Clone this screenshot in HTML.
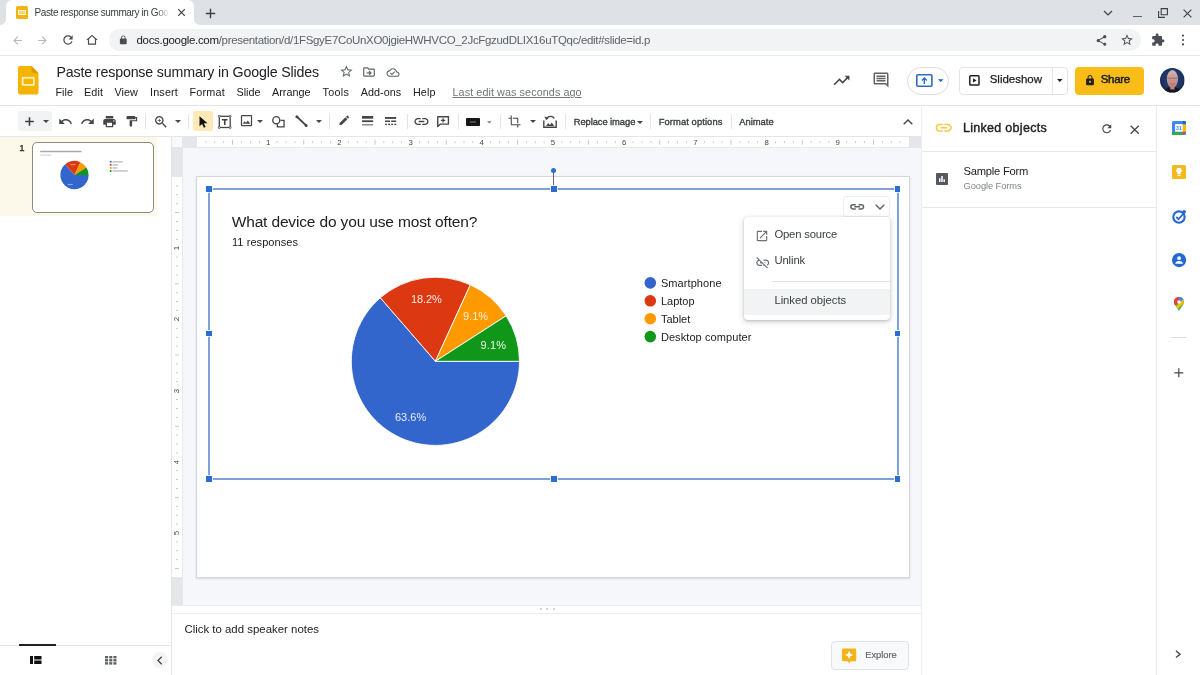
<!DOCTYPE html>
<html>
<head>
<meta charset="utf-8">
<title>Paste response summary in Google Slides</title>
<style>
*{box-sizing:border-box;margin:0;padding:0}
html,body{width:1200px;height:675px;overflow:hidden;background:#fff}
body{font-family:"Liberation Sans",sans-serif;color:#202124;position:relative;font-size:12px}
.abs{position:absolute}
.t{position:absolute;white-space:nowrap;line-height:1}
svg{position:absolute;overflow:visible}
/* browser chrome */
#tabbar{left:0;top:0;width:1200px;height:25px;background:#dee1e6}
#tab{left:6px;top:0;width:188px;height:26px;background:#fff;border-radius:6px 6px 0 0}
#navrow{left:0;top:25px;width:1200px;height:30px;background:#fff}
#omni{left:109px;top:29px;width:1032px;height:22px;border-radius:11px;background:#f1f3f4}
#navline{left:0;top:54.700px;width:1200px;height:1px;background:#e6e8eb}
/* docs header */
#hdrline{left:0;top:105px;width:1200px;height:1px;background:#e3e5e8}
#tbline{left:0;top:136px;width:921px;height:1px;background:#e3e5e8}
.menu{top:87px;font-size:12px;color:#202124}
/* filmstrip */
#film{left:0;top:137px;width:171px;height:538px;background:#fff}
#filmsel{left:0;top:137px;width:157px;height:78.500px;background:#fcf8ea}
#filmborder{left:171px;top:137px;width:1px;height:538px;background:#e3e5e8}
#thumb{left:32.200px;top:141.700px;width:122px;height:71.500px;border:1.800px solid #8c8c84;border-radius:5px;background:#fff}
/* canvas */
#canvas{left:172px;top:137px;width:749px;height:469px;background:#f5f7fa}
#hruler{left:197px;top:137px;width:712px;height:10px;background:#fff}
#vruler{left:172px;top:177px;width:10px;height:400px;background:#fff}
#slide{left:196px;top:176px;width:714px;height:402px;background:#fff;border:1px solid #d4d6da;box-shadow:0 1px 2px rgba(0,0,0,.12)}
/* right panel */
#rpanel{left:921px;top:106px;width:236px;height:569px;background:#fff;border-left:1px solid #eceef1}
#side{left:1156px;top:106px;width:44px;height:569px;background:#fff;border-left:1px solid #e8eaed}
</style>
</head>
<body>
<div id="w" style="position:absolute;left:0;top:0;width:1200px;height:675px;will-change:transform">
<!-- ===== browser chrome ===== -->
<div class="abs" id="tabbar"></div>
<div class="abs" id="tab"></div>
<div class="abs" id="navrow"></div>
<svg style="left:0;top:19px" width="6" height="6" viewBox="0 0 6 6"><path d="M0 6H6V0A6 6 0 0 1 0 6z" fill="#fff"/></svg>
<svg style="left:194px;top:19px" width="6" height="6" viewBox="0 0 6 6"><path d="M6 6H0V0A6 6 0 0 0 6 6z" fill="#fff"/></svg>
<div class="abs" id="omni"></div>
<div class="abs" id="navline"></div>

<!-- favicon -->
<div class="abs" style="left:15.500px;top:6px;width:12.500px;height:13px;background:#f1b417;border-radius:1.500px"></div>
<div class="abs" style="left:17.700px;top:9.700px;width:8.200px;height:5.800px;background:#f6d771;border:1.300px solid #fff6d0;border-radius:.5px"></div>
<span class="t" style="left:34.50px;top:8.00px;font-size:10.0px;letter-spacing:-0.401px;color:#3c4043;">Paste response summary in Goo</span>
<div class="abs" style="left:156px;top:4px;width:16px;height:18px;background:linear-gradient(90deg,rgba(255,255,255,0),#fff 85%)"></div>
<svg style="left:177px;top:8px" width="9" height="9" viewBox="0 0 9 9"><path d="M1.2 1.2L7.8 7.8M7.8 1.2L1.2 7.8" stroke="#3c4043" stroke-width="1.2" fill="none"/></svg>
<svg style="left:205px;top:7.5px" width="11" height="11" viewBox="0 0 11 11"><path d="M5.5 .8V10.2M.8 5.500H10.2" stroke="#3c4043" stroke-width="1.4" fill="none"/></svg>
<!-- window controls -->
<svg style="left:1103px;top:9px" width="10" height="8" viewBox="0 0 10 8"><path d="M1 2l4 4 4-4" stroke="#3c4043" stroke-width="1.2" fill="none"/></svg>
<div class="abs" style="left:1133px;top:16px;width:9px;height:1.2px;background:#5f6368"></div>
<svg style="left:1158px;top:8px" width="10" height="10" viewBox="0 0 10 10"><path d="M3.2 .6h6.200v6.200H3.200z M.6 3v6.400h6.400" stroke="#3c4043" stroke-width="1.100" fill="none"/></svg>
<svg style="left:1183px;top:9px" width="9" height="9" viewBox="0 0 9 9"><path d="M.6 .6L8.400 8.400M8.400 .6L.6 8.400" stroke="#3c4043" stroke-width="1.100" fill="none"/></svg>
<!-- nav icons -->
<svg style="left:11px;top:33.500px" width="13" height="13" viewBox="0 0 24 24"><path fill="#b4b7bb" d="M20 11H7.830l5.590-5.590L12 4l-8 8 8 8 1.410-1.410L7.830 13H20v-2z"/></svg>
<svg style="left:36px;top:33.500px" width="13" height="13" viewBox="0 0 24 24"><path fill="#b4b7bb" d="M12 4l-1.410 1.410L16.170 11H4v2h12.170l-5.580 5.590L12 20l8-8z"/></svg>
<svg style="left:60.500px;top:33px" width="14" height="14" viewBox="0 0 24 24"><path fill="#4a4d51" d="M17.650 6.350C16.200 4.900 14.210 4 12 4c-4.420 0-7.990 3.580-7.990 8s3.570 8 7.990 8c3.730 0 6.840-2.550 7.730-6h-2.080c-.820 2.330-3.040 4-5.650 4-3.310 0-6-2.690-6-6s2.690-6 6-6c1.660 0 3.140.690 4.220 1.780L13 11h7V4l-2.350 2.350z"/></svg>
<svg style="left:85px;top:33px" width="14" height="14" viewBox="0 0 24 24"><path fill="#4a4d51" d="M12 5.700l5 4.500V18H7v-7.800l5-4.500M12 3L2 12h3v8h14v-8h3L12 3z"/></svg>
<svg style="left:119.400px;top:35.300px" width="8.600" height="9.800" viewBox="3 0 18 23"><path fill="#4a4d51" d="M18 8h-1V6c0-2.760-2.240-5-5-5S7 3.240 7 6v2H6c-1.100 0-2 .9-2 2v10c0 1.100.9 2 2 2h12c1.100 0 2-.9 2-2V10c0-1.100-.9-2-2-2zm-2.900 0H8.900V6c0-1.710 1.390-3.100 3.100-3.100 1.710 0 3.100 1.390 3.100 3.100v2z"/></svg>
<span class="t" style="left:136.50px;top:35.00px;font-size:11.5px;letter-spacing:-0.317px;color:#5f6368;"><span style="color:#202124">docs.google.com</span>/presentation/d/1FSgyE7CoUnXO0jgieHWHVCO_2JcFgzudDLIX16uTQqc/edit#slide=id.p</span>
<svg style="left:1095px;top:33.500px" width="13" height="13" viewBox="0 0 24 24"><path fill="#4a4d51" d="M18 16.080c-.760 0-1.440.300-1.960.770L8.910 12.700c.050-.230.090-.460.090-.700s-.040-.470-.090-.700l7.050-4.110c.540.500 1.250.810 2.040.810 1.660 0 3-1.340 3-3s-1.340-3-3-3-3 1.340-3 3c0 .240.040.470.090.700L8.040 9.810C7.500 9.310 6.790 9 6 9c-1.660 0-3 1.340-3 3s1.340 3 3 3c.790 0 1.500-.310 2.040-.810l7.120 4.160c-.050.210-.080.430-.080.650 0 1.610 1.310 2.920 2.920 2.920 1.610 0 2.920-1.310 2.920-2.920s-1.310-2.920-2.920-2.920z"/></svg>
<svg style="left:1119.500px;top:33px" width="14" height="14" viewBox="0 0 24 24"><path fill="#4a4d51" d="M22 9.240l-7.190-.620L12 2 9.190 8.630 2 9.240l5.460 4.730L5.820 21 12 17.270 18.180 21l-1.630-7.030L22 9.240zM12 15.400l-3.760 2.270 1-4.280-3.320-2.880 4.380-.380L12 6.100l1.710 4.040 4.380.380-3.320 2.880 1 4.280L12 15.400z"/></svg>
<svg style="left:1150.500px;top:33px" width="14" height="14" viewBox="0 0 24 24"><path fill="#4a4d51" d="M20.500 11H19V7c0-1.100-.9-2-2-2h-4V3.500C13 2.120 11.880 1 10.500 1S8 2.120 8 3.500V5H4c-1.100 0-1.990.9-1.990 2v3.800H3.500c1.490 0 2.700 1.210 2.700 2.700s-1.210 2.700-2.700 2.700H2V20c0 1.100.9 2 2 2h3.800v-1.500c0-1.490 1.210-2.700 2.700-2.700 1.490 0 2.700 1.210 2.700 2.700V22H17c1.100 0 2-.9 2-2v-4h1.500c1.380 0 2.500-1.120 2.500-2.500S21.880 11 20.500 11z"/></svg>
<svg style="left:1181px;top:34px" width="4" height="12" viewBox="0 0 4 12"><circle cx="2" cy="1.600" r="1.100" fill="#4a4d51"/><circle cx="2" cy="6" r="1.100" fill="#4a4d51"/><circle cx="2" cy="10.400" r="1.100" fill="#4a4d51"/></svg>


<!-- ===== docs header ===== -->
<div class="abs" id="hdrline"></div>
<div class="abs" id="tbline"></div>

<!-- slides logo -->
<svg style="left:18px;top:66.300px" width="20.500" height="28.400" viewBox="0 0 20.500 28.400"><path d="M2 0H13.500L20.500 7V26.400a2 2 0 0 1-2 2H2a2 2 0 0 1-2-2V2a2 2 0 0 1 2-2z" fill="#f4b400"/><path d="M13.500 0L20.500 7H15.500a2 2 0 0 1-2-2z" fill="#e09a00"/><rect x="4.650" y="11.750" width="11.250" height="7.100" fill="none" stroke="#fdf0c0" stroke-width="1.700"/></svg>
<span class="t" style="left:56.50px;top:65.00px;font-size:14.2px;letter-spacing:-0.144px;color:#202124;">Paste response summary in Google Slides</span>
<svg style="left:338.800px;top:64.400px" width="14.800" height="14.800" viewBox="0 0 24 24"><path fill="#5f6368" d="M22 9.240l-7.190-.620L12 2 9.190 8.630 2 9.240l5.460 4.730L5.820 21 12 17.270 18.180 21l-1.630-7.030L22 9.240zM12 15.400l-3.760 2.270 1-4.280-3.320-2.880 4.380-.380L12 6.100l1.710 4.040 4.380.380-3.320 2.880 1 4.280L12 15.400z"/></svg>
<svg style="left:362.200px;top:65px" width="14" height="14" viewBox="0 0 24 24"><path fill="#5f6368" d="M20 6h-8l-2-2H4c-1.100 0-2 .9-2 2v12c0 1.100.9 2 2 2h16c1.100 0 2-.9 2-2V8c0-1.100-.9-2-2-2zm0 12H4V6h5.170l2 2H20v10zm-8.500-2l1.410 1.410L16.830 13.500l-3.920-3.910L11.500 11l1.590 1.500H8v2h5.090z"/></svg>
<svg style="left:386px;top:65.500px" width="14" height="13" viewBox="0 0 24 24"><path fill="#5f6368" d="M19.350 10.040C18.670 6.590 15.640 4 12 4 9.110 4 6.600 5.640 5.350 8.040 2.340 8.360 0 10.910 0 14c0 3.310 2.690 6 6 6h13c2.760 0 5-2.240 5-5 0-2.640-2.050-4.780-4.650-4.960zM19 18H6c-2.210 0-4-1.790-4-4 0-2.050 1.530-3.760 3.560-3.970l1.070-.110.500-.950C8.080 7.140 9.940 6 12 6c2.620 0 4.880 1.860 5.390 4.430l.300 1.500 1.530.110c1.560.100 2.780 1.410 2.780 2.960 0 1.650-1.350 3-3 3zm-9-3.820l-2.090-2.090L6.500 13.500 10 17l6.010-6.010-1.410-1.410z"/></svg>
<span class="t" style="left:55.50px;top:87.00px;font-size:10.8px;letter-spacing:0.023px;">File</span>
<span class="t" style="left:84.00px;top:87.00px;font-size:10.8px;letter-spacing:0.098px;">Edit</span>
<span class="t" style="left:114.50px;top:87.00px;font-size:10.8px;letter-spacing:0.070px;">View</span>
<span class="t" style="left:150.00px;top:87.00px;font-size:10.8px;letter-spacing:0.164px;">Insert</span>
<span class="t" style="left:189.50px;top:87.00px;font-size:10.8px;letter-spacing:0.216px;">Format</span>
<span class="t" style="left:236.50px;top:87.00px;font-size:10.8px;letter-spacing:-0.003px;">Slide</span>
<span class="t" style="left:272.00px;top:87.00px;font-size:10.8px;letter-spacing:0.011px;">Arrange</span>
<span class="t" style="left:322.50px;top:87.00px;font-size:10.8px;letter-spacing:0.296px;">Tools</span>
<span class="t" style="left:360.70px;top:87.00px;font-size:10.8px;letter-spacing:0.054px;">Add-ons</span>
<span class="t" style="left:413.00px;top:87.00px;font-size:10.8px;letter-spacing:0.070px;">Help</span>
<span class="t" style="left:452.50px;top:87.00px;font-size:10.8px;letter-spacing:0.078px;color:#70757a;text-decoration:underline;text-underline-offset:1px;text-decoration-thickness:.8px;">Last edit was seconds ago</span>
<!-- right side of header -->
<svg style="left:832px;top:71px" width="19" height="19" viewBox="0 0 24 24"><path fill="#444746" d="M16 6l2.290 2.290-4.880 4.880-4-4L2 16.590 3.410 18l6-6 4 4 6.300-6.290L22 12V6z"/></svg>
<svg style="left:872px;top:71px" width="18" height="18" viewBox="0 0 24 24"><path fill="#5f6368" d="M21.990 4c0-1.100-.890-2-1.990-2H4c-1.100 0-2 .9-2 2v12c0 1.100.9 2 2 2h14l4 4-.010-18zM20 4v13.170L18.830 16H4V4h16zM6 12h12v2H6zm0-3h12v2H6zm0-3h12v2H6z"/></svg>
<div class="abs" style="left:906.700px;top:66.700px;width:42px;height:28px;border:1px solid #dadce0;border-radius:14px;background:#fff"></div>
<svg style="left:915.800px;top:73.700px" width="16.700" height="13" viewBox="0 0 16.700 13"><rect x=".8" y=".8" width="15.100" height="11.400" rx="1" fill="#fff" stroke="#2a6acb" stroke-width="1.600"/><path d="M8.350 10V4.200M5.900 6.500L8.350 4l2.450 2.500" stroke="#2a6acb" stroke-width="1.400" fill="none"/></svg>
<svg style="left:937.500px;top:78.500px" width="5.500" height="3" viewBox="0 0 10 5"><path d="M0 0h10L5 5z" fill="#1a62c6"/></svg>
<div class="abs" style="left:958.700px;top:66.700px;width:109.600px;height:28px;border:1px solid #e1e3e6;border-radius:4px;background:#fff"></div>
<div class="abs" style="left:1052.300px;top:67.500px;width:1px;height:26.500px;background:#e3e5e8"></div>
<svg style="left:969.200px;top:75px" width="10.800" height="10.800" viewBox="0 0 10.800 10.800"><rect x=".8" y=".8" width="9.200" height="9.200" rx=".8" fill="none" stroke="#202124" stroke-width="1.500"/><path d="M4 3.200L7.600 5.400 4 7.600z" fill="#202124"/></svg>
<span class="t" style="left:989.70px;top:74.00px;font-size:11.5px;letter-spacing:-0.014px;color:#202124;-webkit-text-stroke:0.25px #202124;">Slideshow</span>
<svg style="left:1057px;top:79.200px" width="5.600" height="3" viewBox="0 0 10 5"><path d="M0 0h10L5 5z" fill="#202124"/></svg>
<div class="abs" style="left:1075px;top:67px;width:68.700px;height:27.700px;border-radius:4px;background:#fabd17"></div>
<svg style="left:1086px;top:74.800px" width="8" height="10.200" viewBox="4 1 16 21"><path fill="#202124" d="M18 8h-1V6c0-2.760-2.240-5-5-5S7 3.240 7 6v2H6c-1.100 0-2 .9-2 2v10c0 1.100.9 2 2 2h12c1.100 0 2-.9 2-2V10c0-1.100-.9-2-2-2zm-6 9c-1.100 0-2-.9-2-2s.9-2 2-2 2 .9 2 2-.9 2-2 2zm3.100-9H8.900V6c0-1.710 1.390-3.100 3.100-3.100 1.710 0 3.100 1.390 3.100 3.100v2z"/></svg>
<span class="t" style="left:1100.80px;top:74.00px;font-size:11.5px;letter-spacing:-0.358px;color:#202124;-webkit-text-stroke:0.5px #202124;">Share</span>
<!-- avatar -->
<svg style="left:1159.500px;top:68px" width="24.600" height="24.600" viewBox="0 0 24.600 24.600"><defs><clipPath id="avc"><circle cx="12.300" cy="12.300" r="12.300"/></clipPath><linearGradient id="avf" x1="0" y1="0" x2="0" y2="1"><stop offset="0" stop-color="#cfb4b6"/><stop offset=".45" stop-color="#c99a98"/><stop offset="1" stop-color="#bf7f7a"/></linearGradient><radialGradient id="avb" cx=".5" cy=".45" r=".55"><stop offset="0" stop-color="#24407a"/><stop offset=".8" stop-color="#1c3263"/><stop offset="1" stop-color="#151d38"/></radialGradient><filter id="avbl" x="-20%" y="-20%" width="140%" height="140%"><feGaussianBlur stdDeviation=".45"/></filter></defs><g clip-path="url(#avc)"><rect width="24.600" height="24.600" fill="url(#avb)"/><g filter="url(#avbl)"><ellipse cx="12.400" cy="25" rx="9.600" ry="5.700" fill="#14151b"/><rect x="10.300" y="17.500" width="4.200" height="4" fill="#b9827c"/><ellipse cx="12.400" cy="11" rx="5.600" ry="9" fill="url(#avf)"/><path d="M7.400 10.200H17.400" stroke="#8d6a6c" stroke-width=".9"/><path d="M10.300 15.600Q12.400 17 14.500 15.600" stroke="#a86560" stroke-width=".8" fill="none"/></g></g></svg>


<!-- ===== toolbar ===== -->
<div class="abs" style="left:18.200px;top:111.300px;width:34.100px;height:19.500px;background:#f1f3f4;border-radius:2px"></div>
<svg style="left:24.500px;top:116.700px" width="9" height="9" viewBox="0 0 9 9"><path d="M4.500 .2V8.800M.2 4.500H8.800" stroke="#3c4043" stroke-width="1.600" fill="none"/></svg>
<svg style="left:43px;top:120px" width="6" height="3.200" viewBox="0 0 10 5"><path d="M0 0h10L5 5z" fill="#444746"/></svg>
<svg style="left:58px;top:114px" width="15" height="15" viewBox="0 0 24 24"><path fill="#444746" d="M12.500 8c-2.650 0-5.050.990-6.900 2.600L2 7v9h9l-3.620-3.620c1.390-1.160 3.160-1.880 5.120-1.880 3.540 0 6.550 2.310 7.600 5.500l2.370-.780C21.080 11.030 17.150 8 12.500 8z"/></svg>
<svg style="left:80px;top:114px" width="15" height="15" viewBox="0 0 24 24"><path fill="#444746" d="M18.400 10.600C16.550 8.990 14.150 8 11.500 8c-4.650 0-8.580 3.030-9.960 7.220L3.900 16c1.050-3.190 4.050-5.500 7.600-5.500 1.950 0 3.730.720 5.120 1.880L13 16h9V7l-3.600 3.600z"/></svg>
<svg style="left:102px;top:114px" width="15" height="15" viewBox="0 0 24 24"><path fill="#444746" d="M19 8H5c-1.660 0-3 1.340-3 3v6h4v4h12v-4h4v-6c0-1.660-1.340-3-3-3zm-3 11H8v-5h8v5zm3-7c-.550 0-1-.450-1-1s.450-1 1-1 1 .450 1 1-.450 1-1 1zm-1-9H6v4h12V3z"/></svg>
<svg style="left:124px;top:114.650px" width="15" height="12.600" viewBox="0 0 24 24" preserveAspectRatio="none"><path fill="#444746" d="M18 4V3c0-.550-.450-1-1-1H5c-.550 0-1 .450-1 1v4c0 .550.450 1 1 1h12c.550 0 1-.450 1-1V6h1v4H9v11c0 .550.450 1 1 1h2c.550 0 1-.450 1-1v-9h8V4h-3z"/></svg>
<div class="abs" style="left:145px;top:113.500px;width:1px;height:15.500px;background:#e2e4e7"></div>
<svg style="left:152.5px;top:113.5px" width="16" height="16" viewBox="0 0 24 24"><path fill="#444746" d="M15.500 14h-.790l-.280-.270C15.410 12.590 16 11.110 16 9.500 16 5.910 13.090 3 9.500 3S3 5.910 3 9.500 5.910 16 9.500 16c1.610 0 3.090-.590 4.230-1.570l.270.280v.790l5 4.990L20.490 19l-4.990-5zm-6 0C7.010 14 5 11.990 5 9.500S7.010 5 9.500 5 14 7.010 14 9.500 11.990 14 9.500 14zM12 10h-2v2H9v-2H7V9h2V7h1v2h2v1z"/></svg>
<svg style="left:175px;top:120px" width="6" height="3.200" viewBox="0 0 10 5"><path d="M0 0h10L5 5z" fill="#444746"/></svg>
<div class="abs" style="left:188px;top:113.500px;width:1px;height:15.500px;background:#e2e4e7"></div>
<div class="abs" style="left:193.300px;top:111.300px;width:19.500px;height:20px;background:#fdeab8;border-radius:2px"></div>
<svg style="left:198.500px;top:115.500px" width="9" height="12" viewBox="0 0 9 12"><path d="M.5 .3V10.300L3.100 7.900 4.900 11.800 6.600 11 4.800 7.200H8.500z" fill="#111"/></svg>
<svg style="left:218.200px;top:114.700px" width="13.500" height="13.800" viewBox="0 0 13.500 13.800"><rect x="1.300" y="1.300" width="10.900" height="11.200" fill="none" stroke="#444746" stroke-width="1.300"/><rect x="0.35" y="0.35" width="1.800" height="1.800" rx=".7" fill="#fff" stroke="#444746" stroke-width=".8"/><rect x="11.35" y="0.35" width="1.800" height="1.800" rx=".7" fill="#fff" stroke="#444746" stroke-width=".8"/><rect x="0.35" y="11.65" width="1.800" height="1.800" rx=".7" fill="#fff" stroke="#444746" stroke-width=".8"/><rect x="11.35" y="11.65" width="1.800" height="1.800" rx=".7" fill="#fff" stroke="#444746" stroke-width=".8"/><path d="M3.900 4H9.600V5.500H7.550V10H5.950V5.500H3.900z" fill="#3c4043"/></svg>
<svg style="left:239px;top:113.400px" width="15" height="15" viewBox="0 0 24 24"><path fill="#444746" d="M19 5v14H5V5h14m0-2H5c-1.100 0-2 .9-2 2v14c0 1.100.9 2 2 2h14c1.100 0 2-.9 2-2V5c0-1.100-.9-2-2-2zm-4.860 8.860l-3 3.870L9 13.140 6 17h12l-3.860-5.140z"/></svg>
<svg style="left:257px;top:120px" width="6" height="3.200" viewBox="0 0 10 5"><path d="M0 0h10L5 5z" fill="#444746"/></svg>
<svg style="left:270.500px;top:114.500px" width="14" height="13.500" viewBox="0 0 14 13.500"><path d="M9.800 5.350H13.050V11.850H6.350V9.300" fill="none" stroke="#444746" stroke-width="1.300"/><circle cx="5.300" cy="5.200" r="3.550" fill="#fff" stroke="#444746" stroke-width="1.400"/></svg>
<svg style="left:295px;top:115px" width="13.500" height="12.500" viewBox="0 0 13.500 12.500"><path d="M1.900 1.700L11.100 10.400" stroke="#444746" stroke-width="1.900"/><circle cx="1.900" cy="1.700" r="1.500" fill="#444746"/><circle cx="11.100" cy="10.400" r="1.500" fill="#444746"/></svg>
<svg style="left:316px;top:120px" width="6" height="3.200" viewBox="0 0 10 5"><path d="M0 0h10L5 5z" fill="#444746"/></svg>
<div class="abs" style="left:328.5px;top:113.500px;width:1px;height:15.500px;background:#e2e4e7"></div>
<svg style="left:338.400px;top:113.700px" width="12.700" height="12.700" viewBox="0 0 24 24"><path fill="#444746" d="M3 17.250V21h3.750L17.810 9.940l-3.750-3.750L3 17.250zM20.710 7.040c.390-.390.390-1.020 0-1.410l-2.340-2.340c-.390-.390-1.020-.390-1.410 0l-1.830 1.830 3.750 3.750 1.830-1.830z"/></svg>
<svg style="left:362px;top:116.400px" width="11.200" height="10" viewBox="0 0 11.200 10"><rect x="0" y="0" width="11.200" height="2.700" fill="#444746"/><rect x="0" y="4.300" width="11.200" height="1.800" fill="#444746"/><rect x="0" y="8.300" width="11.200" height="1.100" fill="#5f6368"/></svg>
<svg style="left:385px;top:116.900px" width="11.200" height="8.400" viewBox="0 0 11.200 8.400"><rect x="0" y="0" width="11.200" height="1.900" fill="#444746"/><rect x="0" y="3.500" width="5" height="1.500" fill="#444746"/><rect x="6.200" y="3.500" width="5" height="1.500" fill="#444746"/><rect x="0.0" y="6.700" width="1.900" height="1.400" fill="#444746"/><rect x="3.1" y="6.700" width="1.900" height="1.400" fill="#444746"/><rect x="6.2" y="6.700" width="1.900" height="1.400" fill="#444746"/><rect x="9.3" y="6.700" width="1.900" height="1.400" fill="#444746"/></svg>
<div class="abs" style="left:406.5px;top:113.500px;width:1px;height:15.500px;background:#e2e4e7"></div>
<svg style="left:412.800px;top:112.700px" width="17" height="17" viewBox="0 0 24 24"><path fill="#444746" d="M3.900 12c0-1.710 1.390-3.100 3.100-3.100h4V7H7c-2.760 0-5 2.240-5 5s2.240 5 5 5h4v-1.900H7c-1.710 0-3.100-1.390-3.100-3.100zM8 13h8v-2H8v2zm9-6h-4v1.900h4c1.710 0 3.100 1.390 3.100 3.100s-1.390 3.100-3.100 3.100h-4V17h4c2.760 0 5-2.240 5-5s-2.240-5-5-5z"/></svg>
<svg style="left:437.300px;top:115.700px" width="12.200" height="11.200" viewBox="0 0 12.200 11.200"><path d="M.75 .75H11.450V8.100H3.500L.75 10.600z" fill="none" stroke="#444746" stroke-width="1.400" stroke-linejoin="round"/><path d="M6.100 2.200V6.600M3.900 4.400H8.300" stroke="#444746" stroke-width="1.300"/></svg>
<div class="abs" style="left:457.5px;top:113.500px;width:1px;height:15.500px;background:#e2e4e7"></div>
<div class="abs" style="left:466.100px;top:118px;width:13.600px;height:8.100px;background:#161616;border-radius:1px"></div>
<div class="abs" style="left:469.800px;top:121.400px;width:6.200px;height:1.400px;background:#4a4a4a"></div>
<svg style="left:487px;top:120.500px" width="4.600" height="2.600" viewBox="0 0 10 5"><path d="M0 0h10L5 5z" fill="#777"/></svg>
<div class="abs" style="left:499.5px;top:113.500px;width:1px;height:15.500px;background:#e2e4e7"></div>
<svg style="left:508.400px;top:115px" width="13" height="13" viewBox="0 0 24 24"><path fill="#444746" d="M17 15h2V7c0-1.100-.9-2-2-2H9v2h8v8zM7 17V1H5v4H1v2h4v10c0 1.100.9 2 2 2h10v4h2v-4h4v-2H7z"/></svg>
<svg style="left:529.5px;top:120px" width="6" height="3.200" viewBox="0 0 10 5"><path d="M0 0h10L5 5z" fill="#444746"/></svg>
<svg style="left:543px;top:115px" width="14" height="13" viewBox="0 0 14 13"><path d="M.8 5.500V12.200H13.200V5.500" fill="none" stroke="#444746" stroke-width="1.400"/><path d="M3 11l2.300-3 1.600 2 1.900-2.500L11.200 11z" fill="#444746"/><path d="M3.500 4.300A4.300 4.300 0 0 1 11.300 3.500" fill="none" stroke="#444746" stroke-width="1.300"/><path d="M1.300 1.500L3.100 5 5.800 3z" fill="#444746"/></svg>
<div class="abs" style="left:564.5px;top:113.500px;width:1px;height:15.500px;background:#e2e4e7"></div>
<span class="t" style="left:573.70px;top:117.00px;font-size:9.4px;letter-spacing:-0.073px;color:#3c4043;-webkit-text-stroke:0.35px #3c4043;">Replace image</span>
<svg style="left:637.2px;top:120.5px" width="6" height="3.200" viewBox="0 0 10 5"><path d="M0 0h10L5 5z" fill="#444746"/></svg>
<div class="abs" style="left:650.3px;top:113.500px;width:1px;height:15.500px;background:#e2e4e7"></div>
<span class="t" style="left:658.70px;top:117.00px;font-size:9.4px;letter-spacing:0.091px;color:#3c4043;-webkit-text-stroke:0.35px #3c4043;">Format options</span>
<div class="abs" style="left:730.8px;top:113.500px;width:1px;height:15.500px;background:#e2e4e7"></div>
<span class="t" style="left:739.20px;top:117.00px;font-size:9.4px;letter-spacing:0.013px;color:#3c4043;-webkit-text-stroke:0.35px #3c4043;">Animate</span>
<svg style="left:903px;top:118.500px" width="10" height="6" viewBox="0 0 10 6"><path d="M.7 5.300L5 1l4.300 4.300" fill="none" stroke="#444746" stroke-width="1.400"/></svg>


<!-- ===== filmstrip ===== -->
<div class="abs" id="film"></div>
<div class="abs" id="filmsel"></div>
<div class="abs" id="filmborder"></div>
<div class="abs" id="thumb"></div>
<span class="t" style="left:19.30px;top:143.00px;font-size:9.5px;color:#202124;-webkit-text-stroke:0.25px #202124;">1</span>
<svg style="left:0;top:0" width="172" height="230" viewBox="0 0 172 230"><path d="M74.47 175.05L65.19 164.35A14.17 14.17 0 1 0 88.64 175.05Z" fill="#3366cc"/><path d="M74.47 175.05L80.36 162.16A14.17 14.17 0 0 0 65.19 164.35Z" fill="#dc3912"/><path d="M74.47 175.05L86.39 167.39A14.17 14.17 0 0 0 80.36 162.16Z" fill="#ff9900"/><path d="M74.47 175.05L88.64 175.05A14.17 14.17 0 0 0 86.39 167.39Z" fill="#109618"/><rect x="40.15" y="150.74" width="41.38" height="1.500" fill="#555" opacity=".5"/><rect x="40.33" y="154.62" width="10.95" height="1" fill="#777" opacity=".4"/><circle cx="110.68" cy="161.84" r="1" fill="#3366cc"/><rect x="112.48" y="161.36" width="10.24" height="1.100" fill="#777" opacity=".6"/><circle cx="110.68" cy="164.86" r="1" fill="#dc3912"/><rect x="112.48" y="164.37" width="5.73" height="1.100" fill="#777" opacity=".6"/><circle cx="110.68" cy="167.88" r="1" fill="#ff9900"/><rect x="112.48" y="167.39" width="5.06" height="1.100" fill="#777" opacity=".6"/><circle cx="110.68" cy="170.89" r="1" fill="#109618"/><rect x="112.48" y="170.40" width="15.27" height="1.100" fill="#777" opacity=".6"/><rect x="70.36" y="164.05" width="5" height="1.100" fill="#fff" opacity=".45"/><rect x="67.66" y="183.93" width="5" height="1.100" fill="#fff" opacity=".45"/></svg>
<div class="abs" style="left:0;top:645px;width:171px;height:1px;background:#e3e5e8"></div>
<div class="abs" style="left:18.600px;top:644.300px;width:37.400px;height:2.200px;background:#202124"></div>
<svg style="left:30px;top:656.300px" width="11.500" height="8" viewBox="0 0 11.500 8"><rect x="0" y="0" width="3" height="8" fill="#111"/><rect x="4.200" y="0" width="7.300" height="3.500" fill="#111"/><rect x="4.200" y="4.500" width="7.300" height="3.500" fill="#111"/></svg>
<svg style="left:105px;top:656px" width="11.500" height="8.600" viewBox="0 0 11.500 8.600"><rect x="0" y="0" width="3.100" height="2.400" fill="#5f6368"/><rect x="0" y="3.1" width="3.100" height="2.400" fill="#5f6368"/><rect x="0" y="6.2" width="3.100" height="2.400" fill="#5f6368"/><rect x="4.2" y="0" width="3.100" height="2.400" fill="#5f6368"/><rect x="4.2" y="3.1" width="3.100" height="2.400" fill="#5f6368"/><rect x="4.2" y="6.2" width="3.100" height="2.400" fill="#5f6368"/><rect x="8.4" y="0" width="3.100" height="2.400" fill="#5f6368"/><rect x="8.4" y="3.1" width="3.100" height="2.400" fill="#5f6368"/><rect x="8.4" y="6.2" width="3.100" height="2.400" fill="#5f6368"/></svg>
<div class="abs" style="left:151.500px;top:651.700px;width:16.600px;height:16.600px;border-radius:50%;background:#f3f4f5"></div>
<svg style="left:157px;top:655.500px" width="5.500" height="9" viewBox="0 0 5.500 9"><path d="M4.700 .7L1 4.500l3.700 3.800" fill="none" stroke="#444746" stroke-width="1.300"/></svg>


<!-- ===== canvas ===== -->
<div class="abs" id="canvas"></div>
<div class="abs" id="hruler"></div>
<div class="abs" id="vruler"></div>
<div class="abs" id="slide"></div>
<div class="abs" style="left:172px;top:137px;width:10px;height:10px;background:#f8f9fa"></div>
<div class="abs" style="left:182px;top:137px;width:15px;height:10px;background:#e4e6ea"></div>
<div class="abs" style="left:909px;top:137px;width:12px;height:10px;background:#e4e6ea"></div>
<div class="abs" style="left:172px;top:147px;width:10px;height:30px;background:#e4e6ea"></div>
<div class="abs" style="left:172px;top:577px;width:10px;height:28px;background:#e4e6ea"></div>
<div class="abs" style="left:172px;top:147px;width:749px;height:1px;background:#e6e8eb"></div>
<div class="abs" style="left:182px;top:148px;width:1px;height:457px;background:#e6e8eb"></div>
<svg style="left:0;top:0" width="1200" height="675" viewBox="0 0 1200 675"><rect x="205.50" y="141.20" width=".8" height="2" fill="#b9bcc1"/><rect x="214.40" y="141.20" width=".8" height="2" fill="#b9bcc1"/><rect x="223.30" y="141.20" width=".8" height="2" fill="#b9bcc1"/><rect x="232.20" y="139.70" width=".8" height="5" fill="#b9bcc1"/><rect x="241.10" y="141.20" width=".8" height="2" fill="#b9bcc1"/><rect x="250.00" y="141.20" width=".8" height="2" fill="#b9bcc1"/><rect x="258.90" y="141.20" width=".8" height="2" fill="#b9bcc1"/><rect x="276.70" y="141.20" width=".8" height="2" fill="#b9bcc1"/><rect x="285.60" y="141.20" width=".8" height="2" fill="#b9bcc1"/><rect x="294.50" y="141.20" width=".8" height="2" fill="#b9bcc1"/><rect x="303.40" y="139.70" width=".8" height="5" fill="#b9bcc1"/><rect x="312.30" y="141.20" width=".8" height="2" fill="#b9bcc1"/><rect x="321.20" y="141.20" width=".8" height="2" fill="#b9bcc1"/><rect x="330.10" y="141.20" width=".8" height="2" fill="#b9bcc1"/><rect x="347.90" y="141.20" width=".8" height="2" fill="#b9bcc1"/><rect x="356.80" y="141.20" width=".8" height="2" fill="#b9bcc1"/><rect x="365.70" y="141.20" width=".8" height="2" fill="#b9bcc1"/><rect x="374.60" y="139.70" width=".8" height="5" fill="#b9bcc1"/><rect x="383.50" y="141.20" width=".8" height="2" fill="#b9bcc1"/><rect x="392.40" y="141.20" width=".8" height="2" fill="#b9bcc1"/><rect x="401.30" y="141.20" width=".8" height="2" fill="#b9bcc1"/><rect x="419.10" y="141.20" width=".8" height="2" fill="#b9bcc1"/><rect x="428.00" y="141.20" width=".8" height="2" fill="#b9bcc1"/><rect x="436.90" y="141.20" width=".8" height="2" fill="#b9bcc1"/><rect x="445.80" y="139.70" width=".8" height="5" fill="#b9bcc1"/><rect x="454.70" y="141.20" width=".8" height="2" fill="#b9bcc1"/><rect x="463.60" y="141.20" width=".8" height="2" fill="#b9bcc1"/><rect x="472.50" y="141.20" width=".8" height="2" fill="#b9bcc1"/><rect x="490.30" y="141.20" width=".8" height="2" fill="#b9bcc1"/><rect x="499.20" y="141.20" width=".8" height="2" fill="#b9bcc1"/><rect x="508.10" y="141.20" width=".8" height="2" fill="#b9bcc1"/><rect x="517.00" y="139.70" width=".8" height="5" fill="#b9bcc1"/><rect x="525.90" y="141.20" width=".8" height="2" fill="#b9bcc1"/><rect x="534.80" y="141.20" width=".8" height="2" fill="#b9bcc1"/><rect x="543.70" y="141.20" width=".8" height="2" fill="#b9bcc1"/><rect x="561.50" y="141.20" width=".8" height="2" fill="#b9bcc1"/><rect x="570.40" y="141.20" width=".8" height="2" fill="#b9bcc1"/><rect x="579.30" y="141.20" width=".8" height="2" fill="#b9bcc1"/><rect x="588.20" y="139.70" width=".8" height="5" fill="#b9bcc1"/><rect x="597.10" y="141.20" width=".8" height="2" fill="#b9bcc1"/><rect x="606.00" y="141.20" width=".8" height="2" fill="#b9bcc1"/><rect x="614.90" y="141.20" width=".8" height="2" fill="#b9bcc1"/><rect x="632.70" y="141.20" width=".8" height="2" fill="#b9bcc1"/><rect x="641.60" y="141.20" width=".8" height="2" fill="#b9bcc1"/><rect x="650.50" y="141.20" width=".8" height="2" fill="#b9bcc1"/><rect x="659.40" y="139.70" width=".8" height="5" fill="#b9bcc1"/><rect x="668.30" y="141.20" width=".8" height="2" fill="#b9bcc1"/><rect x="677.20" y="141.20" width=".8" height="2" fill="#b9bcc1"/><rect x="686.10" y="141.20" width=".8" height="2" fill="#b9bcc1"/><rect x="703.90" y="141.20" width=".8" height="2" fill="#b9bcc1"/><rect x="712.80" y="141.20" width=".8" height="2" fill="#b9bcc1"/><rect x="721.70" y="141.20" width=".8" height="2" fill="#b9bcc1"/><rect x="730.60" y="139.70" width=".8" height="5" fill="#b9bcc1"/><rect x="739.50" y="141.20" width=".8" height="2" fill="#b9bcc1"/><rect x="748.40" y="141.20" width=".8" height="2" fill="#b9bcc1"/><rect x="757.30" y="141.20" width=".8" height="2" fill="#b9bcc1"/><rect x="775.10" y="141.20" width=".8" height="2" fill="#b9bcc1"/><rect x="784.00" y="141.20" width=".8" height="2" fill="#b9bcc1"/><rect x="792.90" y="141.20" width=".8" height="2" fill="#b9bcc1"/><rect x="801.80" y="139.70" width=".8" height="5" fill="#b9bcc1"/><rect x="810.70" y="141.20" width=".8" height="2" fill="#b9bcc1"/><rect x="819.60" y="141.20" width=".8" height="2" fill="#b9bcc1"/><rect x="828.50" y="141.20" width=".8" height="2" fill="#b9bcc1"/><rect x="846.30" y="141.20" width=".8" height="2" fill="#b9bcc1"/><rect x="855.20" y="141.20" width=".8" height="2" fill="#b9bcc1"/><rect x="864.10" y="141.20" width=".8" height="2" fill="#b9bcc1"/><rect x="873.00" y="139.70" width=".8" height="5" fill="#b9bcc1"/><rect x="881.90" y="141.20" width=".8" height="2" fill="#b9bcc1"/><rect x="890.80" y="141.20" width=".8" height="2" fill="#b9bcc1"/><rect x="899.70" y="141.20" width=".8" height="2" fill="#b9bcc1"/><rect x="176.00" y="185.50" width="2" height=".8" fill="#b9bcc1"/><rect x="176.00" y="194.40" width="2" height=".8" fill="#b9bcc1"/><rect x="176.00" y="203.30" width="2" height=".8" fill="#b9bcc1"/><rect x="175.00" y="212.20" width="4" height=".8" fill="#b9bcc1"/><rect x="176.00" y="221.10" width="2" height=".8" fill="#b9bcc1"/><rect x="176.00" y="230.00" width="2" height=".8" fill="#b9bcc1"/><rect x="176.00" y="238.90" width="2" height=".8" fill="#b9bcc1"/><rect x="176.00" y="256.70" width="2" height=".8" fill="#b9bcc1"/><rect x="176.00" y="265.60" width="2" height=".8" fill="#b9bcc1"/><rect x="176.00" y="274.50" width="2" height=".8" fill="#b9bcc1"/><rect x="175.00" y="283.40" width="4" height=".8" fill="#b9bcc1"/><rect x="176.00" y="292.30" width="2" height=".8" fill="#b9bcc1"/><rect x="176.00" y="301.20" width="2" height=".8" fill="#b9bcc1"/><rect x="176.00" y="310.10" width="2" height=".8" fill="#b9bcc1"/><rect x="176.00" y="327.90" width="2" height=".8" fill="#b9bcc1"/><rect x="176.00" y="336.80" width="2" height=".8" fill="#b9bcc1"/><rect x="176.00" y="345.70" width="2" height=".8" fill="#b9bcc1"/><rect x="175.00" y="354.60" width="4" height=".8" fill="#b9bcc1"/><rect x="176.00" y="363.50" width="2" height=".8" fill="#b9bcc1"/><rect x="176.00" y="372.40" width="2" height=".8" fill="#b9bcc1"/><rect x="176.00" y="381.30" width="2" height=".8" fill="#b9bcc1"/><rect x="176.00" y="399.10" width="2" height=".8" fill="#b9bcc1"/><rect x="176.00" y="408.00" width="2" height=".8" fill="#b9bcc1"/><rect x="176.00" y="416.90" width="2" height=".8" fill="#b9bcc1"/><rect x="175.00" y="425.80" width="4" height=".8" fill="#b9bcc1"/><rect x="176.00" y="434.70" width="2" height=".8" fill="#b9bcc1"/><rect x="176.00" y="443.60" width="2" height=".8" fill="#b9bcc1"/><rect x="176.00" y="452.50" width="2" height=".8" fill="#b9bcc1"/><rect x="176.00" y="470.30" width="2" height=".8" fill="#b9bcc1"/><rect x="176.00" y="479.20" width="2" height=".8" fill="#b9bcc1"/><rect x="176.00" y="488.10" width="2" height=".8" fill="#b9bcc1"/><rect x="175.00" y="497.00" width="4" height=".8" fill="#b9bcc1"/><rect x="176.00" y="505.90" width="2" height=".8" fill="#b9bcc1"/><rect x="176.00" y="514.80" width="2" height=".8" fill="#b9bcc1"/><rect x="176.00" y="523.70" width="2" height=".8" fill="#b9bcc1"/><rect x="176.00" y="541.50" width="2" height=".8" fill="#b9bcc1"/><rect x="176.00" y="550.40" width="2" height=".8" fill="#b9bcc1"/><rect x="176.00" y="559.30" width="2" height=".8" fill="#b9bcc1"/><rect x="175.00" y="568.20" width="4" height=".8" fill="#b9bcc1"/></svg>
<span class="t" style="left:266.00px;top:139.00px;font-size:7.8px;color:#444746;">1</span>
<span class="t" style="left:337.20px;top:139.00px;font-size:7.8px;color:#444746;">2</span>
<span class="t" style="left:408.40px;top:139.00px;font-size:7.8px;color:#444746;">3</span>
<span class="t" style="left:479.60px;top:139.00px;font-size:7.8px;color:#444746;">4</span>
<span class="t" style="left:550.80px;top:139.00px;font-size:7.8px;color:#444746;">5</span>
<span class="t" style="left:622.00px;top:139.00px;font-size:7.8px;color:#444746;">6</span>
<span class="t" style="left:693.20px;top:139.00px;font-size:7.8px;color:#444746;">7</span>
<span class="t" style="left:764.40px;top:139.00px;font-size:7.8px;color:#444746;">8</span>
<span class="t" style="left:835.60px;top:139.00px;font-size:7.8px;color:#444746;">9</span>
<span class="t" style="left:173px;top:244.2px;width:8px;height:8px;font-size:7.800px;color:#444746;transform:rotate(-90deg);text-align:center">1</span>
<span class="t" style="left:173px;top:315.4px;width:8px;height:8px;font-size:7.800px;color:#444746;transform:rotate(-90deg);text-align:center">2</span>
<span class="t" style="left:173px;top:386.6px;width:8px;height:8px;font-size:7.800px;color:#444746;transform:rotate(-90deg);text-align:center">3</span>
<span class="t" style="left:173px;top:457.8px;width:8px;height:8px;font-size:7.800px;color:#444746;transform:rotate(-90deg);text-align:center">4</span>
<span class="t" style="left:173px;top:529.0px;width:8px;height:8px;font-size:7.800px;color:#444746;transform:rotate(-90deg);text-align:center">5</span>
<svg style="left:0;top:0" width="1200" height="675" viewBox="0 0 1200 675"><path d="M435.4 361.3L380.33 297.74A84.1 84.1 0 1 0 519.50 361.30Z" fill="#3366cc" stroke="#fff" stroke-width=".9" stroke-linejoin="round"/><path d="M435.4 361.3L470.34 284.80A84.1 84.1 0 0 0 380.33 297.74Z" fill="#dc3912" stroke="#fff" stroke-width=".9" stroke-linejoin="round"/><path d="M435.4 361.3L506.15 315.83A84.1 84.1 0 0 0 470.34 284.80Z" fill="#ff9900" stroke="#fff" stroke-width=".9" stroke-linejoin="round"/><path d="M435.4 361.3L519.50 361.30A84.1 84.1 0 0 0 506.15 315.83Z" fill="#109618" stroke="#fff" stroke-width=".9" stroke-linejoin="round"/><circle cx="650.3" cy="282.9" r="5.800" fill="#3366cc"/><circle cx="650.3" cy="300.8" r="5.800" fill="#dc3912"/><circle cx="650.3" cy="318.7" r="5.800" fill="#ff9900"/><circle cx="650.3" cy="336.6" r="5.800" fill="#109618"/></svg>
<span class="t" style="left:231.70px;top:214.00px;font-size:15.5px;letter-spacing:-0.151px;color:#202124;">What device do you use most often?</span>
<span class="t" style="left:232.00px;top:237.00px;font-size:11.0px;letter-spacing:0.064px;color:#202124;">11 responses</span>
<span class="t" style="left:410.90px;top:294.00px;font-size:11.0px;letter-spacing:-0.061px;color:#fde9e4;">18.2%</span>
<span class="t" style="left:462.90px;top:311.00px;font-size:11.0px;letter-spacing:0.055px;color:#fff0d4;">9.1%</span>
<span class="t" style="left:480.60px;top:340.00px;font-size:11.0px;letter-spacing:0.080px;color:#e9f7ea;">9.1%</span>
<span class="t" style="left:394.90px;top:412.00px;font-size:11.0px;letter-spacing:0.059px;color:#e4ecfb;">63.6%</span>
<span class="t" style="left:660.90px;top:278.00px;font-size:11.0px;letter-spacing:0.086px;color:#222222;">Smartphone</span>
<span class="t" style="left:660.90px;top:296.00px;font-size:11.0px;color:#222222;">Laptop</span>
<span class="t" style="left:660.90px;top:314.00px;font-size:11.0px;color:#222222;">Tablet</span>
<span class="t" style="left:660.90px;top:332.00px;font-size:11.0px;letter-spacing:0.083px;color:#222222;">Desktop computer</span>
<div class="abs" style="left:208px;top:187.900px;width:690.800px;height:292.100px;border:2px solid #7fa1d8"></div>
<div class="abs" style="left:553.300px;top:172px;width:.8px;height:15px;background:#62676d"></div>
<div class="abs" style="left:551px;top:167.600px;width:5.400px;height:5.400px;border-radius:50%;background:#2a6ed2"></div>
<div class="abs" style="left:206.3px;top:185.9px;width:5.800px;height:5.800px;background:#2a6ed2;box-shadow:0 0 0 .8px #fff"></div>
<div class="abs" style="left:206.3px;top:330.7px;width:5.800px;height:5.800px;background:#2a6ed2;box-shadow:0 0 0 .8px #fff"></div>
<div class="abs" style="left:206.3px;top:476.0px;width:5.800px;height:5.800px;background:#2a6ed2;box-shadow:0 0 0 .8px #fff"></div>
<div class="abs" style="left:550.8px;top:185.9px;width:5.800px;height:5.800px;background:#2a6ed2;box-shadow:0 0 0 .8px #fff"></div>
<div class="abs" style="left:550.8px;top:476.0px;width:5.800px;height:5.800px;background:#2a6ed2;box-shadow:0 0 0 .8px #fff"></div>
<div class="abs" style="left:894.7px;top:185.9px;width:5.800px;height:5.800px;background:#2a6ed2;box-shadow:0 0 0 .8px #fff"></div>
<div class="abs" style="left:894.7px;top:330.7px;width:5.800px;height:5.800px;background:#2a6ed2;box-shadow:0 0 0 .8px #fff"></div>
<div class="abs" style="left:894.7px;top:476.0px;width:5.800px;height:5.800px;background:#2a6ed2;box-shadow:0 0 0 .8px #fff"></div>
<div class="abs" style="left:842.900px;top:195.600px;width:47.100px;height:21.500px;background:#fff;border:1px solid #eceef0;border-radius:3px"></div>
<svg style="left:850px;top:203.800px" width="14.400" height="5.700" viewBox="0 0 14.400 5.700"><path d="M5.800 .8H2.900A2.050 2.050 0 0 0 2.900 4.900H5.800M8.600 .8H11.500A2.050 2.050 0 0 1 11.500 4.900H8.600M4.300 2.850H10.100" fill="none" stroke="#5f6368" stroke-width="1.500"/></svg>
<svg style="left:875.300px;top:204px" width="10" height="6" viewBox="0 0 10 6"><path d="M.7 .7L5 5l4.300-4.300" fill="none" stroke="#5f6368" stroke-width="1.400"/></svg>
<div class="abs" style="left:743.800px;top:216.700px;width:146.600px;height:103.700px;background:#fff;border-radius:4px;box-shadow:0 1px 3px rgba(60,64,67,.28),0 2px 6px 1px rgba(60,64,67,.13)"></div>
<div class="abs" style="left:743.800px;top:288.900px;width:146.600px;height:26px;background:#f1f3f4"></div>
<div class="abs" style="left:772.200px;top:281.200px;width:118.200px;height:1px;background:#e3e5e8"></div>
<svg style="left:755px;top:228.500px" width="14" height="14" viewBox="0 0 24 24"><path fill="#6c7075" d="M19 19H5V5h7V3H5c-1.110 0-2 .9-2 2v14c0 1.100.890 2 2 2h14c1.100 0 2-.9 2-2v-7h-2v7zM14 3v2h3.590l-9.830 9.830 1.410 1.410L19 6.410V10h2V3h-7z"/></svg>
<svg style="left:755px;top:254.500px" width="15.500" height="15.500" viewBox="0 0 24 24"><path fill="#6c7075" d="M17 7h-4v1.900h4c1.710 0 3.100 1.390 3.100 3.100 0 1.430-.980 2.630-2.310 2.980l1.460 1.460C20.880 15.610 22 13.950 22 12c0-2.760-2.240-5-5-5zm-1 4h-2.190l2 2H16zM2 4.270l3.110 3.110C3.290 8.120 2 9.910 2 12c0 2.760 2.240 5 5 5h4v-1.900H7c-1.710 0-3.100-1.390-3.100-3.100 0-1.590 1.210-2.900 2.760-3.070L8.730 11H8v2h2.730L13 15.270V17h1.730l4.010 4L20 19.740 3.270 3 2 4.270z"/></svg>
<span class="t" style="left:774.40px;top:229.00px;font-size:11.3px;letter-spacing:-0.181px;color:#3c4043;">Open source</span>
<span class="t" style="left:774.40px;top:255.00px;font-size:11.3px;letter-spacing:-0.118px;color:#3c4043;">Unlink</span>
<span class="t" style="left:774.40px;top:295.00px;font-size:11.3px;letter-spacing:-0.031px;color:#3c4043;">Linked objects</span>


<!-- ===== notes ===== -->
<div class="abs" style="left:172px;top:605px;width:749px;height:8.500px;background:#fff;border-top:1px solid #eaecef;border-bottom:1px solid #eaecef"></div>
<div class="abs" style="left:172px;top:613.500px;width:749px;height:62px;background:#fff"></div>
<div class="abs" style="left:539.5px;top:608.300px;width:2px;height:2px;border-radius:50%;background:#c4c7cb"></div>
<div class="abs" style="left:546px;top:608.300px;width:2px;height:2px;border-radius:50%;background:#c4c7cb"></div>
<div class="abs" style="left:552.5px;top:608.300px;width:2px;height:2px;border-radius:50%;background:#c4c7cb"></div>
<span class="t" style="left:184.40px;top:624.00px;font-size:11.4px;letter-spacing:0.014px;color:#202124;">Click to add speaker notes</span>
<div class="abs" style="left:831.200px;top:641px;width:78.300px;height:29.400px;background:#f8f9fa;border:1px solid #e0e2e5;border-radius:4px"></div>
<svg style="left:842.300px;top:648px" width="14.200" height="15.600" viewBox="0 0 15 15.300"><path d="M1.500 0H13.500A1.500 1.500 0 0 1 15 1.500V12A1.500 1.500 0 0 1 13.500 13.500H9.300L7.500 15.300 5.700 13.500H1.500A1.500 1.500 0 0 1 0 12V1.500A1.500 1.500 0 0 1 1.500 0z" fill="#f2b31b"/><path d="M7.500 2.300L8.800 5.400 11.900 6.700 8.800 8 7.500 11.100 6.200 8 3.100 6.700 6.200 5.400z" fill="#fff"/></svg>
<span class="t" style="left:865.30px;top:650.00px;font-size:9.4px;letter-spacing:-0.057px;color:#5f6368;-webkit-text-stroke:0.15px #5f6368;">Explore</span>


<!-- ===== right panel ===== -->
<div class="abs" id="rpanel"></div>
<div class="abs" id="side"></div>
<svg style="left:934.300px;top:118.300px" width="19.400" height="19.400" viewBox="0 0 24 24"><path fill="#f3ca3e" d="M3.900 12c0-1.710 1.390-3.100 3.100-3.100h4V7H7c-2.760 0-5 2.240-5 5s2.240 5 5 5h4v-1.900H7c-1.710 0-3.100-1.390-3.100-3.100zM8 13h8v-2H8v2zm9-6h-4v1.900h4c1.710 0 3.100 1.390 3.100 3.100s-1.390 3.100-3.100 3.100h-4V17h4c2.760 0 5-2.240 5-5s-2.240-5-5-5z"/></svg>
<span class="t" style="left:963.00px;top:122.00px;font-size:12.5px;letter-spacing:0.291px;color:#202124;-webkit-text-stroke:0.4px #202124;">Linked objects</span>
<svg style="left:1100px;top:122px" width="13.500" height="13.500" viewBox="0 0 24 24"><path fill="#444746" d="M17.650 6.350C16.200 4.900 14.210 4 12 4c-4.420 0-7.990 3.580-7.990 8s3.570 8 7.990 8c3.730 0 6.840-2.550 7.730-6h-2.080c-.820 2.330-3.040 4-5.650 4-3.310 0-6-2.690-6-6s2.690-6 6-6c1.660 0 3.140.690 4.220 1.780L13 11h7V4l-2.350 2.350z"/></svg>
<svg style="left:1130px;top:124.500px" width="9.500" height="9.500" viewBox="0 0 9.500 9.500"><path d="M.7 .7L8.800 8.800M8.800 .7L.7 8.800" stroke="#444746" stroke-width="1.300" fill="none"/></svg>
<div class="abs" style="left:922px;top:150.800px;width:235px;height:1px;background:#e6e8eb"></div>
<div class="abs" style="left:922px;top:207px;width:235px;height:1px;background:#e6e8eb"></div>
<svg style="left:936px;top:172.600px" width="12" height="12" viewBox="0 0 12 12"><rect width="12" height="12" rx="1" fill="#55585d"/><rect x="3" y="5.300" width="1.500" height="3.700" fill="#fff"/><rect x="5.250" y="3" width="1.500" height="6" fill="#fff"/><rect x="7.500" y="6.300" width="1.500" height="2.700" fill="#fff"/></svg>
<span class="t" style="left:963.60px;top:166.00px;font-size:11.2px;letter-spacing:-0.251px;color:#202124;">Sample Form</span>
<span class="t" style="left:963.60px;top:182.00px;font-size:9.3px;letter-spacing:-0.076px;color:#80868b;">Google Forms</span>
<svg style="left:1172px;top:121.300px" width="14" height="14" viewBox="0 0 14 14"><rect x="0" y="0" width="14" height="14" rx="1.500" fill="#4285f4"/><rect x="10.500" y="3" width="3.500" height="8" fill="#fbbc04"/><rect x="0" y="10.700" width="11" height="3.300" fill="#34a853"/><path d="M10.500 14L14 10.700H10.500z" fill="#ea4335"/><path d="M10.500 0H12.500A1.500 1.500 0 0 1 14 1.500V3.200H10.500z" fill="#1967d2"/><rect x="3.100" y="3.100" width="7.600" height="7.600" fill="#fff"/><text x="6.900" y="9" font-family="Liberation Sans" font-size="5.200" font-weight="700" text-anchor="middle" fill="#4285f4">31</text></svg>
<svg style="left:1172px;top:165px" width="14" height="14" viewBox="0 0 14 14"><rect width="14" height="14" rx="1.600" fill="#f4b91c"/><path d="M7 2.800A2.800 2.800 0 0 0 5.500 8V9.200H8.500V8A2.800 2.800 0 0 0 7 2.800z" fill="#fff"/><rect x="5.500" y="9.900" width="3" height="1" fill="#fff"/></svg>
<svg style="left:1172px;top:209.200px" width="15" height="15" viewBox="0 0 14 14"><circle cx="6.500" cy="7.500" r="5.300" fill="none" stroke="#2468d0" stroke-width="2"/><path d="M4 7.400L6 9.400 10.200 4.900" fill="none" stroke="#2468d0" stroke-width="1.700"/><circle cx="11.300" cy="2.700" r="1.700" fill="#2468d0"/></svg>
<svg style="left:1172.100px;top:253.200px" width="14.200" height="14.200" viewBox="0 0 14.200 14.200"><circle cx="7.100" cy="7.100" r="7.100" fill="#2468d0"/><circle cx="7.100" cy="5.200" r="1.900" fill="#fff"/><path d="M3.400 10.300C3.400 8.600 5.600 7.900 7.100 7.900S10.800 8.600 10.800 10.300V10.800H3.400z" fill="#fff"/></svg>
<svg style="left:1174.200px;top:297px" width="10" height="14.200" viewBox="0 0 10 14.200"><defs><clipPath id="mp"><path d="M5 0A5 5 0 0 0 0 5C0 8.200 3.600 10.500 5 14.200 6.400 10.500 10 8.200 10 5A5 5 0 0 0 5 0z"/></clipPath></defs><g clip-path="url(#mp)"><rect width="10" height="14.200" fill="#34a853"/><path d="M0 0H5V5L0 9z" fill="#ea4335"/><path d="M5 0H10V4L5 5z" fill="#4285f4"/><path d="M0 9L5 5 2 0H0z" fill="#ea4335"/><path d="M0 9.500L5 5 10 3.500V0H7z" fill="none"/><path d="M1 10L10 1.500V6L4 12z" fill="#fbbc04"/><path d="M5 5L10 1V0H5z" fill="#4285f4"/></g><circle cx="5" cy="5" r="1.800" fill="#fff"/></svg>
<div class="abs" style="left:1170.700px;top:337.400px;width:15.300px;height:1px;background:#dadce0"></div>
<svg style="left:1174.300px;top:368px" width="9.600" height="9.600" viewBox="0 0 9.600 9.600"><path d="M4.800 .3V9.300M.3 4.800H9.300" stroke="#444746" stroke-width="1.200" fill="none"/></svg>
<svg style="left:1175.400px;top:649.800px" width="6.200" height="8.400" viewBox="0 0 6.200 8.400"><path d="M1 .8L5 4.200 1 7.600" fill="none" stroke="#444746" stroke-width="1.400"/></svg>


</div>
</body>
</html>
